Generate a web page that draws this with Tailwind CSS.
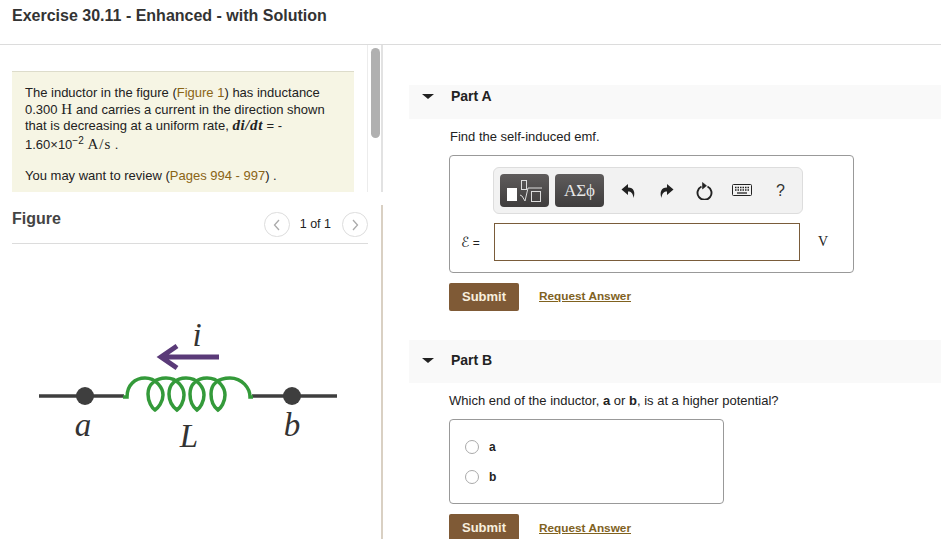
<!DOCTYPE html>
<html lang="en">
<head>
  <meta charset="UTF-8" />
  <title>Exercise 30.11</title>
  <script src="https://cdn.jsdelivr.net/npm/@tailwindcss/browser@4"></script>
</head>
<body class="bg-white font-['Liberation_Sans',Arial,sans-serif] text-[#222]">
  <div class="h-[539px] overflow-hidden">
    <div class="h-[45px] border-b border-[#dcdcdc] pl-3 pt-[6px] text-[16px] leading-[20px] font-bold text-[#333]">Exercise 30.11 - Enhanced - with Solution</div>
    <div class="flex h-[494px]">
      <!-- left column -->
      <div class="relative w-[383px] shrink-0 pl-3">
        <div class="absolute left-[371px] top-[3px] h-[90px] w-[9px] rounded-full bg-[#b0b0b0]"></div>
        <div class="absolute left-[367px] top-0 h-[147px] w-px bg-[#ececec]"></div>
        <div class="absolute left-[381px] top-0 h-[147px] w-[2px] bg-[#e2e2e2]"></div>
        <div class="absolute left-[381px] top-[160px] bottom-0 w-[2px] bg-[#d9d0c3]"></div>
        <div class="mt-[26px] h-[121px] w-[342px] border-t border-[#dddccb] bg-[#f6f5e4] pl-[13px] pt-[13px] text-[13px] leading-[16.5px]">
          <p class="h-[67px] w-[320px] whitespace-nowrap">The inductor in the figure (<span class="text-[#8a6414]">Figure 1</span>) has inductance<br>0.300 <span class="font-['Liberation_Serif',serif] text-[15px] leading-none tracking-[0.5px]">H</span> and carries a current in the direction shown<br>that is decreasing at a uniform rate, <span class="font-['Liberation_Serif',serif] text-[15px] leading-none font-bold italic tracking-[0.6px]">di/dt</span> = -<br><span class="relative top-[2px]">1.60×10<sup class="text-[10px] leading-none">−2</sup> <span class="font-['Liberation_Serif',serif] text-[15px] leading-none tracking-[1px]">A/s</span> .</span></p>
          <p class="mt-[16px]">You may want to review (<span class="text-[#8a6414]">Pages 994 - 997</span>) .</p>
        </div>
        <div class="flex h-[52px] w-[356px] items-start border-b border-[#dcdcdc]">
          <span class="mt-[17px] text-[16px] leading-[20px] font-bold text-[#444]">Figure</span>
          <div class="mt-[20px] ml-auto flex items-center text-[12.5px]">
            <span class="flex h-[25px] w-[26px] items-center justify-center rounded-full border border-[#ddd]">
              <svg width="8" height="12" viewBox="0 0 8 12" fill="none" stroke="#aaa" stroke-width="1.3"><path d="M6 1 1.500 6 6 11"/></svg>
            </span>
            <span class="ml-[10px] mr-[11px]">1 of 1</span>
            <span class="flex h-[25px] w-[26px] items-center justify-center rounded-full border border-[#ddd]">
              <svg width="8" height="12" viewBox="0 0 8 12" fill="none" stroke="#aaa" stroke-width="1.3"><path d="M2 1l4.500 5L2 11"/></svg>
            </span>
          </div>
        </div>
        <!-- circuit figure, drawn in page coordinates -->
        <svg class="-ml-3 mt-[66px]" width="360" height="150" viewBox="0 310 360 150">
          <g stroke="#3e3e3e" stroke-width="3.500" fill="none">
            <path d="M39 396H124"/><path d="M252 396H337"/>
          </g>
          <circle cx="85" cy="396" r="9" fill="#3e3e3e"/>
          <circle cx="292" cy="396" r="9" fill="#3e3e3e"/>
          <path d="M123 397h4C127 385 135 378 145 378C156 378 163 388 163 395C163 402 158 408 155 410C152 408 148 402 148 394C148 384 156 378 166 378C178 378 184 388 184 395C184 402 180 408 177 410C173 407 169 402 169 394C169 384 176 378 186 378C198 378 204 388 204 395C204 402 200 408 197 410C193 407 190 402 190 394C190 384 197 378 207 378C219 378 225 388 225 395C225 402 221 408 218 410C214 407 211 402 211 394C211 384 218 378 230 378C242 378 250 388 250 397h3" fill="none" stroke="#349a3a" stroke-width="3.500"/>
          <path d="M219 357H161M177 346l-16 11 16 11" fill="none" stroke="#5a3a78" stroke-width="5"/>
          <g font-family="Liberation Serif, serif" font-style="italic" font-size="33" fill="#333" text-anchor="middle">
            <text x="197" y="346">i</text>
            <text x="83" y="436">a</text>
            <text x="292" y="436">b</text>
            <text x="189" y="447">L</text>
          </g>
        </svg>
      </div>
      <!-- right column -->
      <div class="min-w-0 flex-1 pl-[26px] pt-[40px] text-[13px]">
        <div class="flex h-[34px] items-center bg-[#f9f9f9] pl-[13px] pb-[12px]">
          <span class="h-0 w-0 border-x-[6px] border-t-[5px] border-x-transparent border-t-[#222]"></span>
          <span class="ml-[17px] text-[14px] font-bold">Part A</span>
        </div>
        <div class="pl-[40px]">
          <p class="mt-[10px] pl-px leading-[16px]">Find the self-induced emf.</p>
          <div class="mt-[10px] h-[118px] w-[405px] rounded-[4px] border border-[#999] pl-[43px] pt-[11px]">
            <div class="flex h-[47px] w-[310px] items-center rounded-[6px] border border-[#ddd] bg-[#f2f2f2] pl-[6px]">
              <span class="flex h-[33px] w-[49px] items-center justify-center gap-[3px] rounded-[4px] bg-gradient-to-b from-[#5f5c5c] to-[#3f3d3d]">
                <span class="mt-[7px] h-[13px] w-[10px] bg-white"></span>
                <svg width="22" height="22" viewBox="0 0 22 22" fill="none" stroke="#ddd" stroke-width="1"><rect x="1.500" y="0.500" width="5" height="9"/><path d="M0 15l2 1 3 5 3-13h14"/><rect x="11.500" y="11.500" width="9" height="10"/></svg>
              </span>
              <span class="ml-[6px] flex h-[33px] w-[49px] items-center justify-center rounded-[4px] bg-gradient-to-b from-[#5f5c5c] to-[#3f3d3d] font-['Liberation_Serif',serif] text-[17px] text-[#e8e8e8]">ΑΣϕ</span>
              <svg class="ml-[17px]" width="15" height="16" viewBox="0 0 15 16" fill="#222"><path d="M7 1 0.500 6.500 7 12V8.500c3 0 5 1.500 5.500 6.500C14.500 9.500 13 4.500 7 4.500z"/></svg>
              <svg class="ml-[23px]" width="15" height="16" viewBox="0 0 15 16" fill="#222"><path d="M8 1l6.500 5.500L8 12V8.500c-3 0-5 1.500-5.500 6.500C0.500 9.500 2 4.500 8 4.500z"/></svg>
              <svg class="ml-[22px]" width="17" height="18" viewBox="0 0 17 18" fill="none" stroke="#222" stroke-width="1.900"><path d="M5.500 4.500a7 7 0 1 0 6 0"/><path d="M6.500 0.500v6.500l4-3.200z" fill="#222" stroke-width="0.600"/></svg>
              <svg class="ml-[19px]" width="20" height="13" viewBox="0 0 20 13" fill="none" stroke="#222"><rect x="0.500" y="0.500" width="19" height="11" rx="1"/><path d="M3 3.500h14M3 6h14" stroke-width="1.300" stroke-dasharray="1.500 1"/><path d="M5 9h10" stroke-width="1.300"/></svg>
              <span class="ml-[24px] text-[16px] text-[#333]">?</span>
            </div>
            <div class="-ml-[32px] mt-[9px] flex h-[38px] items-center">
              <span class="w-[33px] text-[12px]"><span class="font-['DejaVu_Sans',sans-serif] text-[14px] italic">ℰ</span> =</span>
              <div class="h-[38px] w-[306px] border border-[#7a5c3a] bg-white"></div>
              <span class="mb-[2px] ml-[18px] font-['Liberation_Serif',serif] text-[14px]">V</span>
            </div>
          </div>
          <div class="mt-[10px] flex items-center">
            <span class="flex h-[28px] w-[70px] items-center justify-center rounded-[2px] bg-[#7f5a36] text-[13px] font-bold text-[#f8efdf]">Submit</span>
            <span class="mb-[1px] ml-[20px] text-[11.8px] font-bold text-[#80621f] underline">Request Answer</span>
          </div>
        </div>
        <div class="mt-[29px] flex h-[43px] items-center bg-[#f9f9f9] pb-[2px] pl-[13px]">
          <span class="h-0 w-0 border-x-[6px] border-t-[5px] border-x-transparent border-t-[#222]"></span>
          <span class="ml-[17px] text-[14px] font-bold">Part B</span>
        </div>
        <div class="pl-[40px]">
          <p class="mt-[10px] leading-[16px]">Which end of the inductor, <b>a</b> or <b>b</b>, is at a higher potential?</p>
          <div class="mt-[10px] h-[85px] w-[275px] rounded-[4px] border border-[#999] pl-[15px] pt-[20px] text-[12px] font-bold">
            <label class="flex h-[14px] items-center"><span class="h-[14px] w-[14px] rounded-full border border-[#aaa] bg-white"></span><span class="ml-[10px]">a</span></label>
            <label class="mt-[16px] flex h-[14px] items-center"><span class="h-[14px] w-[14px] rounded-full border border-[#aaa] bg-white"></span><span class="ml-[10px]">b</span></label>
          </div>
          <div class="mt-[10px] flex items-center">
            <span class="flex h-[28px] w-[70px] items-center justify-center rounded-[2px] bg-[#7f5a36] text-[13px] font-bold text-[#f8efdf]">Submit</span>
            <span class="mt-[1px] ml-[20px] text-[11.8px] font-bold text-[#80621f] underline">Request Answer</span>
          </div>
        </div>
      </div>
    </div>
  </div>
</body>
</html>
